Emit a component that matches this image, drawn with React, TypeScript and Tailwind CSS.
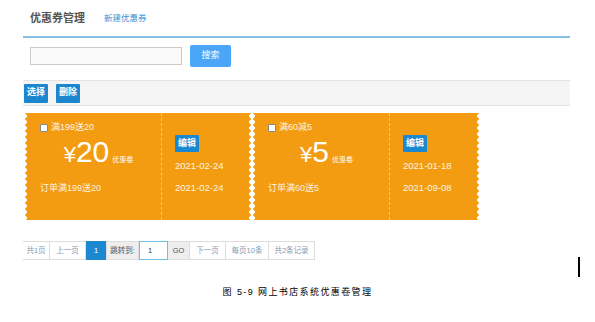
import React from "react";

const coupons = [
  {
    id: 1,
    title: "满199送20",
    amount: "20",
    desc: "订单满199送20",
    start: "2021-02-24",
    end: "2021-02-24",
  },
  {
    id: 2,
    title: "满60减5",
    amount: "5",
    desc: "订单满60送5",
    start: "2021-01-18",
    end: "2021-09-08",
  },
];

const pager = [
  { label: "共1页", w: "w-[27px]" },
  { label: "上一页", w: "w-[36px]" },
];

export default function App() {
  return (
    <div className="relative h-[322px] w-[595px] overflow-hidden bg-white font-['Liberation_Sans','Noto_Sans_CJK_SC',sans-serif]">
      <div className="w-[570px] pl-[23px]">
        {/* header */}
        <div className="flex h-[36px] items-start pt-[9px]">
          <div className="ml-[7px] text-[11px] leading-[18px] font-bold text-[#555]">
            优惠券管理
          </div>
          <div className="ml-[19px] text-[8.5px] leading-[18px] text-[#3b8fd3]">
            新建优惠券
          </div>
        </div>
        <div className="h-[2px] bg-[#86c0e0]" />

        {/* search */}
        <div className="mt-[7px] flex h-[22px] items-center">
          <input
            className="ml-[7px] h-[18px] w-[152px] border border-[#ccc] bg-[#fafafa] outline-none"
            readOnly
          />
          <button className="ml-[8px] h-[22px] w-[41px] rounded-[2px] bg-[#4ba6f7] text-[9px] text-white">
            搜索
          </button>
        </div>

        {/* toolbar */}
        <div className="mt-[13px] flex h-[26px] items-center gap-[8px] border-y border-[#e3e3e3] bg-[#f5f5f5] pl-px">
          <button className="h-[19px] w-[24px] rounded-[1px] bg-[#1c87cf] text-[9px] font-bold text-white">
            选择
          </button>
          <button className="h-[19px] w-[24px] rounded-[1px] bg-[#1c87cf] text-[9px] font-bold text-white">
            删除
          </button>
        </div>

        {/* coupons */}
        <div className="ml-px mt-[7px] flex">
          {coupons.map((c) => (
            <Coupon key={c.id} {...c} />
          ))}
        </div>

        {/* pagination */}
        <div className="mt-[21px] flex h-[19px] text-[7.5px]">
          {pager.map((p) => (
            <div
              key={p.label}
              className={`${p.w} flex items-center justify-center border border-l-0 border-[#ddd] text-[#7f9ab5]`}
            >
              {p.label}
            </div>
          ))}
          <div className="flex w-[20px] items-center justify-center bg-[#1d88d0] text-white">
            1
          </div>
          <div className="flex w-[33px] items-center justify-center border border-[#ddd] bg-[#eee] text-[#555]">
            跳转到:
          </div>
          <div className="flex w-[29px] items-center border border-[#6cc0e4] bg-white pl-[8px] text-[#333]">
            1
          </div>
          <div className="flex w-[22px] items-center justify-center border border-l-0 border-[#ddd] bg-[#eee] text-[#555]">
            GO
          </div>
          <div className="flex w-[36px] items-center justify-center border border-l-0 border-[#ddd] text-[#7f9ab5]">
            下一页
          </div>
          <div className="flex w-[43px] items-center justify-center border border-l-0 border-[#ddd] text-[#7f9ab5]">
            每页10条
          </div>
          <div className="flex w-[46px] items-center justify-center border border-l-0 border-[#ddd] text-[#7f9ab5]">
            共2条记录
          </div>
        </div>
      </div>

      {/* caption */}
      <div className="mt-[26px] w-[595px] text-center text-[9px] leading-[12px] font-normal tracking-[1.4px] text-black">
        图 5-9 网上书店系统优惠卷管理
      </div>

      {/* text cursor */}
      <div className="absolute left-[578px] top-[257px] h-[20px] w-[2px] bg-black" />
    </div>
  );
}

function Coupon({
  title,
  amount,
  desc,
  start,
  end,
}: {
  title: string;
  amount: string;
  desc: string;
  start: string;
  end: string;
}) {
  return (
    <div className="flex h-[107px] w-[228px] bg-[#f39c12] text-[#fdf3e1]">
      <div className="w-[4px] bg-[radial-gradient(circle_at_0_3px,#fff_2.6px,transparent_3px)] bg-[length:4px_6px] bg-repeat-y" />
      <div className="flex w-[133px] flex-col pl-[12px]">
        <div className="mt-[9px] flex h-[12px] items-center gap-[3px] text-[9px]">
          <span className="h-[8px] w-[8px] rounded-[1px] border border-[#888] bg-white" />
          {title}
        </div>
        <div className="mt-[3px] flex items-baseline justify-center pr-[4px] text-white">
          <span className="text-[22px] leading-none">¥</span>
          <span className="text-[30px] leading-none">{amount}</span>
          <span className="ml-[3px] text-[7px]">优惠卷</span>
        </div>
        <div className="mt-[15px] text-[9px] leading-[12px]">{desc}</div>
      </div>
      <div className="flex flex-1 flex-col border-l border-dashed border-[#f8c877] pl-[13px]">
        <button className="mt-[22px] h-[17px] w-[24px] rounded-[1px] bg-[#1a88d1] text-[9px] font-bold text-white">
          编辑
        </button>
        <div className="mt-[8px] text-[9.5px] leading-[12px]">{start}</div>
        <div className="mt-[10px] text-[9.5px] leading-[12px]">{end}</div>
      </div>
      <div className="w-[4px] bg-[radial-gradient(circle_at_100%_3px,#fff_2.6px,transparent_3px)] bg-[length:4px_6px] bg-repeat-y" />
    </div>
  );
}
